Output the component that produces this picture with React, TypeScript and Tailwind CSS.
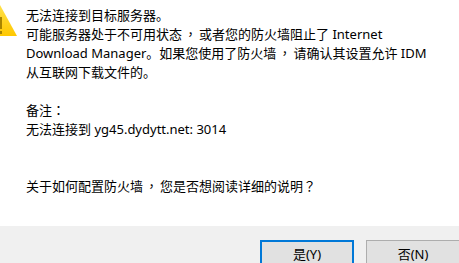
import React from 'react';

const lines = [
  '无法连接到目标服务器。',
  '可能服务器处于不可用状态，或者您的防火墙阻止了 Internet',
  'Download Manager。如果您使用了防火墙，请确认其设置允许 IDM',
  '从互联网下载文件的。',
  '',
  '备注：',
  '无法连接到 yg45.dydytt.net: 3014',
  '',
  '',
  '关于如何配置防火墙，您是否想阅读详细的说明？',
];

// latin runs get a Segoe-like face; ，：？ sit centred in the cell like on Windows
function Line({ text }: { text: string }) {
  const parts = text.split(/([A-Za-z0-9.: ]+|[，：？])/);
  return (
    <div className="h-[19px]">
      {parts.map((p, i) => {
        if (/^[A-Za-z0-9.: ]+$/.test(p))
          return (
            <span key={i} className="font-['Noto_Sans',sans-serif]">
              {p}
            </span>
          );
        if (p === '，')
          return (
            <span key={i} lang="zh-TW" className="px-[2px] font-['Noto_Sans_CJK_TC',sans-serif]">
              {p}
            </span>
          );
        if (/^[：？]$/.test(p))
          return (
            <span key={i} lang="zh-TW" className="font-['Noto_Sans_CJK_TC',sans-serif]">
              {p}
            </span>
          );
        return <span key={i}>{p}</span>;
      })}
    </div>
  );
}

function WarningIcon() {
  // only the right half shows, the dialog edge cuts the rest
  return (
    <svg width="36" height="40" viewBox="0 0 36 40" className="shrink-0 -ml-[18px]">
      <defs>
        <linearGradient id="warn" x1="0" y1="0" x2="0" y2="1">
          <stop offset="0" stopColor="#ffe14a" />
          <stop offset="1" stopColor="#ffc800" />
        </linearGradient>
      </defs>
      <path d="M18 5 L35 36 L1 36 Z" fill="url(#warn)" strokeLinejoin="round" />
      <rect x="16" y="17" width="4" height="12" fill="#a88400" />
      <rect x="16" y="31" width="4" height="3" fill="#a88400" />
    </svg>
  );
}

export default function App() {
  return (
    <div
      lang="zh-CN"
      className="w-[459px] h-[263px] flex flex-col overflow-hidden bg-white text-black font-['Noto_Sans_CJK_SC',sans-serif]"
    >
      <div className="flex-1 flex gap-[8px]">
        <WarningIcon />
        <div className="pt-[5px] text-[13px] leading-[19px] whitespace-pre">
          {lines.map((l, i) => (
            <Line key={i} text={l} />
          ))}
        </div>
      </div>
      <div className="h-[37px] shrink-0 bg-[#f0f0f0] flex gap-[12px] pl-[260px] pt-[14px]">
        <button className="w-[94px] h-[28px] shrink-0 bg-[#e1e1e1] border-2 border-[#0078d7] text-[13px] leading-none">
          是<span className="font-['Noto_Sans',sans-serif]">(Y)</span>
        </button>
        <button className="w-[94px] h-[28px] shrink-0 bg-[#e1e1e1] border border-[#adadad] text-[13px] leading-none">
          否<span className="font-['Noto_Sans',sans-serif]">(N)</span>
        </button>
      </div>
    </div>
  );
}
